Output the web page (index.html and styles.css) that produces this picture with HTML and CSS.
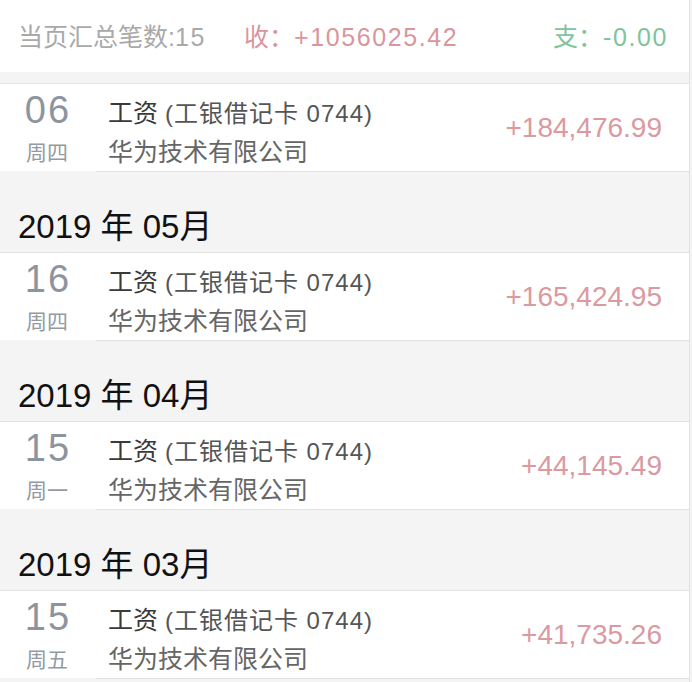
FILE: index.html
```html
<!DOCTYPE html>
<html lang="zh">

<head>
    <meta charset="UTF-8">
    <meta name="viewport" content="width=device-width, initial-scale=1.0">
    <title>收支明细</title>
    <link rel="stylesheet" href="styles.css">
</head>

<body>

    <div class="page">
        <div class="summary">
            <span class="summary-count">当页汇总笔数:<span class="num">15</span></span>
            <span class="summary-in">收：<span class="num">+1056025.42</span></span>
            <span class="summary-out">支：<span class="num">-0.00</span></span>
        </div>

        <div class="record first">
            <div class="date">
                <div class="day">06</div>
                <div class="week">周四</div>
            </div>
            <div class="info">
                <div class="title">工资 <span class="account">(工银借记卡 0744)</span></div>
                <div class="payer">华为技术有限公司</div>
            </div>
            <div class="amount">+184,476.99</div>
        </div>

        <div class="month">2019 年 05月</div>
        <div class="record">
            <div class="date">
                <div class="day">16</div>
                <div class="week">周四</div>
            </div>
            <div class="info">
                <div class="title">工资 <span class="account">(工银借记卡 0744)</span></div>
                <div class="payer">华为技术有限公司</div>
            </div>
            <div class="amount">+165,424.95</div>
        </div>

        <div class="month">2019 年 04月</div>
        <div class="record">
            <div class="date">
                <div class="day">15</div>
                <div class="week">周一</div>
            </div>
            <div class="info">
                <div class="title">工资 <span class="account">(工银借记卡 0744)</span></div>
                <div class="payer">华为技术有限公司</div>
            </div>
            <div class="amount">+44,145.49</div>
        </div>

        <div class="month">2019 年 03月</div>
        <div class="record">
            <div class="date">
                <div class="day">15</div>
                <div class="week">周五</div>
            </div>
            <div class="info">
                <div class="title">工资 <span class="account">(工银借记卡 0744)</span></div>
                <div class="payer">华为技术有限公司</div>
            </div>
            <div class="amount">+41,735.26</div>
        </div>
    </div>

</body>

</html>
```

FILE: styles.css
```css
body {
    margin: 0;
    background-color: #f4f4f4;
    font-family: "Liberation Sans", "Noto Sans CJK SC", sans-serif;
    color: #333;
}

.page {
    width: 689px;
    border-right: 1px solid #e2e2e2;
    height: 682px;
    overflow: hidden;
}

.summary {
    display: flex;
    align-items: center;
    height: 69px;
    padding: 0 21px 3px 18px;
    margin-bottom: 11px;
    background-color: white;
    font-size: 25px;
}

.summary .num {
    letter-spacing: 1.6px;
}

.summary-count {
    color: #a9a9a9;
}

.summary-in {
    margin-left: 38px;
    color: #d9969b;
}

.summary-out {
    margin-left: auto;
    color: #80c49c;
}

.record {
    display: flex;
    height: 87px;
    background-color: white;
    position: relative;
}

.record::after {
    content: "";
    position: absolute;
    left: 96px;
    right: 0;
    bottom: -1px;
    height: 1px;
    background-color: #e2e2e2;
}

.record.first {
    border-top: 1px solid #e6e6e6;
}

.date {
    width: 94px;
    padding-top: 7px;
    text-align: center;
    color: #8c949e;
}

.day {
    font-size: 38px;
    line-height: 38px;
    letter-spacing: 2px;
    text-indent: 2px;
}

.week {
    margin-top: 10px;
    font-size: 21px;
    line-height: 28px;
    color: #939aa3;
}

.info {
    margin-left: 14px;
    padding-top: 14px;
}

.title {
    font-size: 25px;
    line-height: 30px;
    color: #3a3a3a;
}

.account {
    font-size: 24px;
    letter-spacing: 1px;
    color: #555;
}

.payer {
    margin-top: 8px;
    font-size: 25px;
    line-height: 30px;
    color: #666;
}

.amount {
    margin-left: auto;
    padding-right: 27px;
    align-self: center;
    font-size: 28px;
    color: #db9a9f;
}

.month {
    height: 81px;
    margin-top: 1px;
    padding: 36px 0 0 18px;
    box-sizing: border-box;
    border-bottom: 1px solid #e2e2e2;
    font-size: 33px;
    line-height: 38px;
    color: #111;
}
```
